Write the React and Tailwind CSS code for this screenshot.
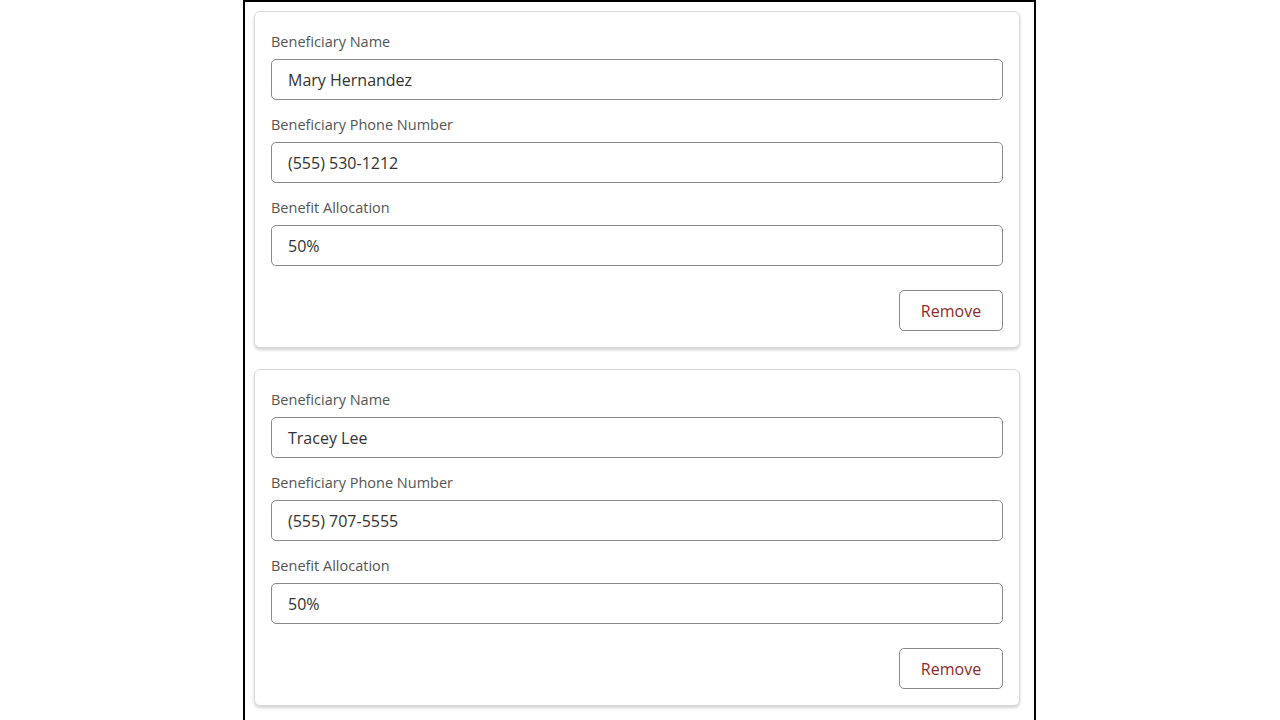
import React from "react";

const font = { fontFamily: '"Open Sans", "Noto Sans", sans-serif' };

function Field({ label, value }) {
  return (
    <div className="flex flex-col">
      <div className="text-[14.5px] leading-[20px] text-[#555555] mb-[7px]">{label}</div>
      <div className="h-[41px] border border-[#8a8a8a] rounded-[5px] flex items-center pl-[16px] text-[16px] text-[#333333]">
        {value}
      </div>
    </div>
  );
}

function Card({ name, phone, alloc }) {
  return (
    <div className="border border-[#d9d9d9] rounded-[6px] bg-white shadow-[0_2px_3px_rgba(0,0,0,0.18)] pt-[20px] pb-[16px] pl-[16px] pr-[16px] flex flex-col">
      <div className="flex flex-col gap-[15px]">
        <Field label="Beneficiary Name" value={name} />
        <Field label="Beneficiary Phone Number" value={phone} />
        <Field label="Benefit Allocation" value={alloc} />
      </div>
      <div className="flex justify-end mt-[24px]">
        <button className="w-[104px] h-[41px] border border-[#8a8a8a] rounded-[5px] text-[16px] text-[#8b2b2b] bg-white">
          Remove
        </button>
      </div>
    </div>
  );
}

export default function App() {
  return (
    <div className="w-[1280px] h-[720px] bg-white overflow-hidden" style={font}>
      <div className="ml-[243px] w-[793px] h-[720px] border-l-2 border-r-2 border-t-2 border-black pl-[9px] pr-[14px] pt-[9px] flex flex-col gap-[21px]">
        <Card name="Mary Hernandez" phone="(555) 530-1212" alloc="50%" />
        <Card name="Tracey Lee" phone="(555) 707-5555" alloc="50%" />
      </div>
    </div>
  );
}
